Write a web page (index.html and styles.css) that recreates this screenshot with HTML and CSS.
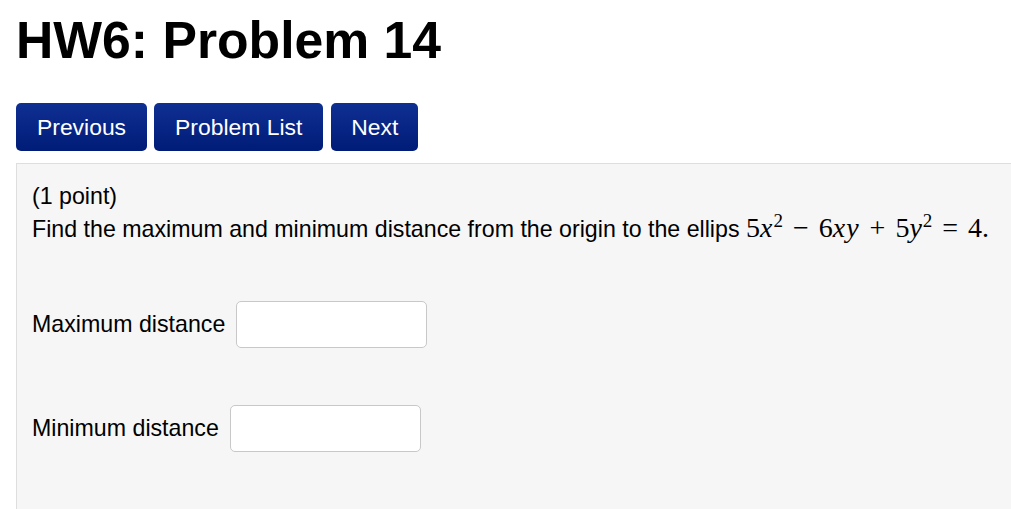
FILE: index.html
```html
<!DOCTYPE html>
<html lang="en">

<head>
    <meta charset="UTF-8">
    <title>HW6: Problem 14</title>
    <link rel="stylesheet" href="styles.css">
</head>

<body>
    <h1 class="page-title">HW6: Problem 14</h1>

    <div class="nav-buttons">
        <a class="nav-button" href="#">Previous</a>
        <a class="nav-button" href="#">Problem List</a>
        <a class="nav-button" href="#">Next</a>
    </div>

    <div class="problem-box">
        <p class="points">(1 point)</p>
        <p class="question">Find the maximum and minimum distance from the origin to the ellips
            <span class="math">5<i>x</i><sup>2</sup><span class="op">&minus;</span>6<i>x</i><i>y</i><span class="op">+</span>5<i>y</i><sup>2</sup><span class="op">=</span>4.</span>
        </p>

        <div class="answer-row">
            <label class="answer-label">Maximum distance</label>
            <input class="answer-input" type="text">
        </div>

        <div class="answer-row">
            <label class="answer-label">Minimum distance</label>
            <input class="answer-input" type="text">
        </div>
    </div>
</body>

</html>
```

FILE: styles.css
```css
body {
    margin: 0;
    padding: 0 0 0 16px;
    overflow: hidden;
    background-color: #fff;
    font-family: "Liberation Sans", Arial, sans-serif;
    color: #000;
}

.page-title {
    margin: 0;
    padding-top: 10px;
    font-size: 51.7px;
    line-height: 60px;
    font-weight: bold;
}

.nav-buttons {
    display: flex;
    gap: 7px;
    margin-top: 33px;
}

.nav-button {
    display: block;
    height: 48px;
    line-height: 48px;
    padding: 0 21px;
    background: linear-gradient(#0f2f92, #001c78);
    color: #fff;
    font-size: 22.9px;
    text-decoration: none;
    border-radius: 5px;
}

.nav-button:nth-child(3) {
    margin-left: 1px;
    padding: 0 20px;
}

.problem-box {
    margin-top: 12px;
    width: 1010px;
    height: 330px;
    padding: 15px 15px 0;
    background-color: #f6f6f6;
    border: 1px solid #dedede;
    border-right: none;
    border-bottom: none;
}

.points,
.question {
    margin: 0;
    font-size: 23.2px;
    line-height: 32px;
}

.points {
    margin-top: 1px;
}

.math {
    font-family: "Liberation Serif", "Times New Roman", serif;
    font-size: 28px;
}

.math i {
    font-style: italic;
    margin-right: 1px;
}

.math sup {
    font-size: 19px;
    vertical-align: 10px;
    line-height: 0;
}

.op {
    margin: 0 10px;
}

.answer-row {
    display: flex;
    align-items: center;
    gap: 11px;
    margin-top: 56px;
}

.answer-row + .answer-row {
    margin-top: 57px;
}

.answer-label {
    font-size: 23.2px;
}

.answer-input {
    box-sizing: border-box;
    width: 191px;
    height: 47px;
    margin: 0;
    padding: 0;
    border: 1px solid #c8c8c8;
    border-radius: 5px;
    background-color: #fff;
}
```
